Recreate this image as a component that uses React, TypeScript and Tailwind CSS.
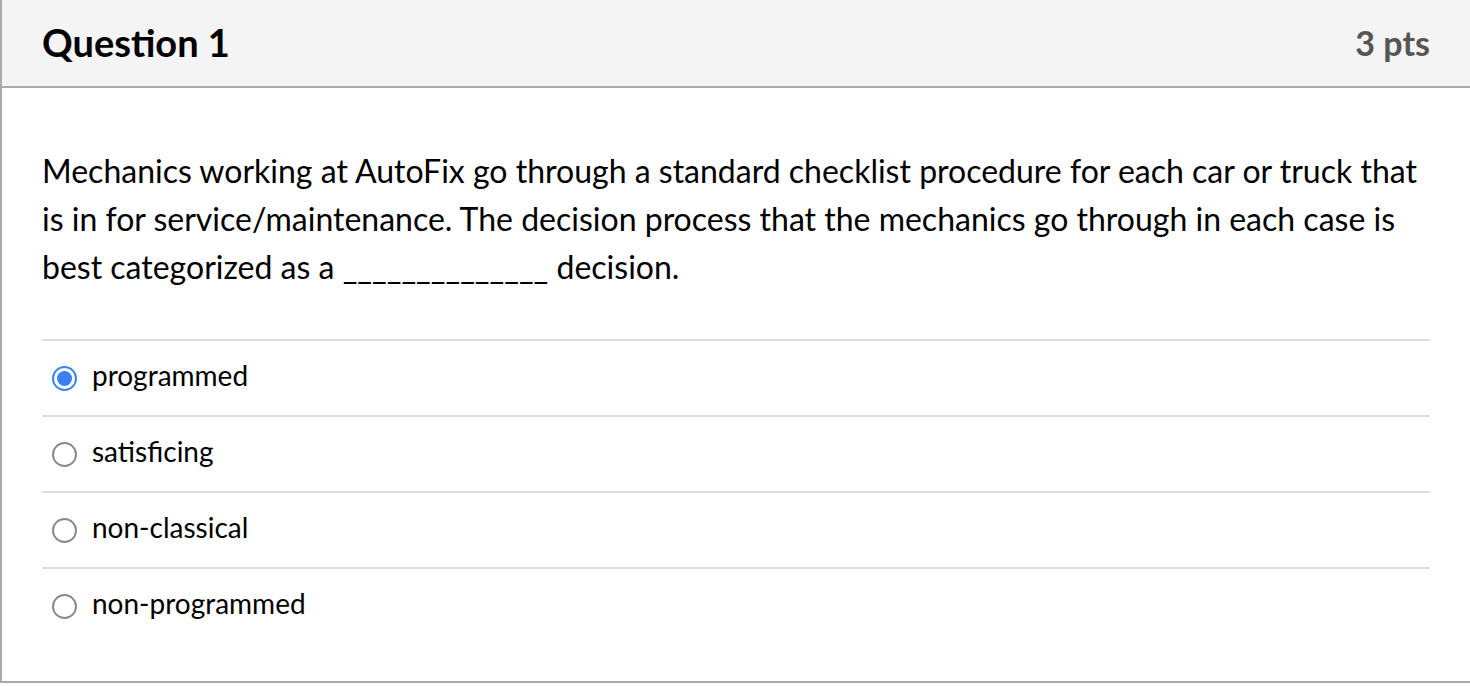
const answers = ['programmed', 'satisficing', 'non-classical', 'non-programmed'];

function Radio({ checked }: { checked: boolean }) {
  if (checked) {
    return (
      <span className="flex h-[25px] w-[25px] shrink-0 items-center justify-center rounded-full border-2 border-[#3b82f6] bg-white">
        <span className="h-[15px] w-[15px] rounded-full bg-[#3b7ff5]" />
      </span>
    );
  }
  return <span className="h-[25px] w-[25px] shrink-0 rounded-full border-2 border-[#8a8a8a] bg-white" />;
}

export default function App() {
  return (
    <div className="h-[686px] w-full overflow-hidden bg-white" style={{ fontFamily: 'Lato, "Open Sans", sans-serif' }}>
      <div className="w-[1474px] border-b-2 border-l-2 border-r-2 border-[#aaaaaa] bg-white">
        <div className="flex h-[88px] items-center justify-between border-b-2 border-[#aaaaaa] bg-[#f4f4f4] pl-[40px] pr-[42px]">
          <h2 className="pb-[2px] text-[38px] font-bold text-black">Question 1</h2>
          <span className="pb-[2px] text-[34px] font-bold text-[#555555]">3 pts</span>
        </div>
        <div className="pb-[38px] pl-[40px] pr-[42px] pt-[59px]">
          <p className="text-[32px] leading-[48px] text-black">
            Mechanics working at AutoFix go through a standard checklist procedure for each car or truck that is in
            for service/maintenance. The decision process that the mechanics go through in each case is best
            categorized as a ______________ decision.
          </p>
          <div className="mt-[48px]">
            {answers.map((a, i) => (
              <div key={a} className="flex h-[76px] items-center gap-[15px] border-t-2 border-[#dddddd] pl-[10px]">
                <Radio checked={i === 0} />
                <span className="pb-[6px] text-[28px] text-black">{a}</span>
              </div>
            ))}
          </div>
        </div>
      </div>
    </div>
  );
}
